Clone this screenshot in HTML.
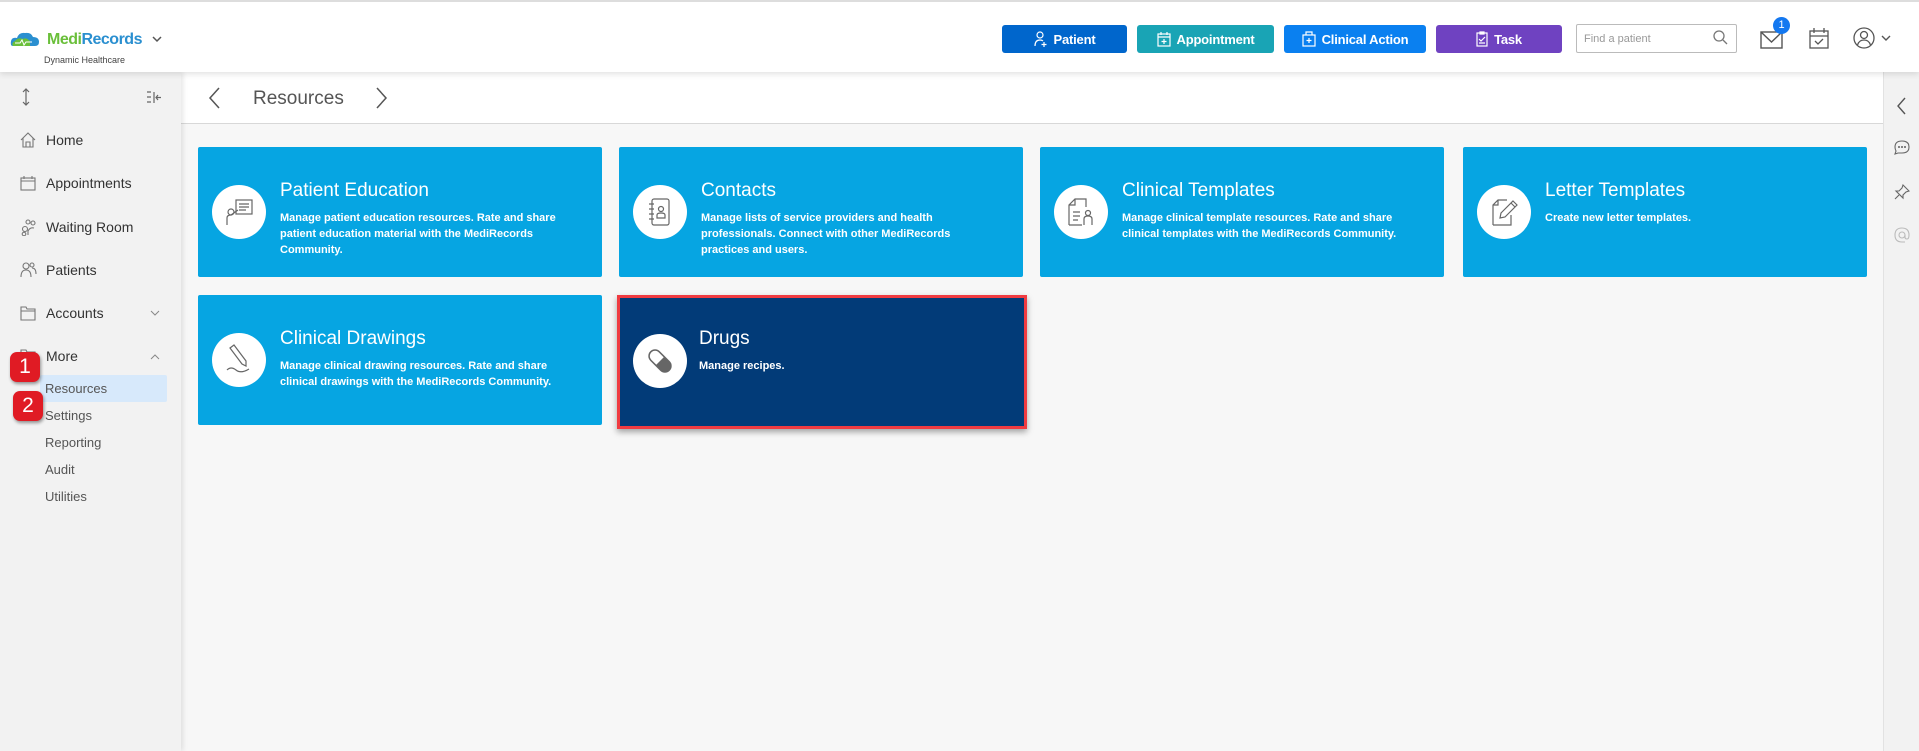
<!DOCTYPE html>
<html><head><meta charset="utf-8"><style>
*{box-sizing:border-box;margin:0;padding:0}
body{width:1919px;height:751px;overflow:hidden;background:#f7f7f7;font-family:"Liberation Sans",sans-serif;position:relative}
.hdr{position:absolute;left:0;top:0;width:1919px;height:72px;background:#fff;border-top:2px solid #ddd;box-shadow:0 2px 6px rgba(0,0,0,.12);z-index:5}
.side{position:absolute;left:0;top:72px;width:181px;height:679px;background:#f2f2f2;box-shadow:2px 0 5px rgba(0,0,0,.1);z-index:3}
.rail{position:absolute;right:0;top:72px;width:36px;height:679px;background:#f2f2f2;border-left:1px solid #e2e2e2}
.bc{position:absolute;left:181px;top:72px;width:1702px;height:52px;background:#fff;border-bottom:1px solid #d8d8d8}
.btn{position:absolute;top:23px;height:28px;border-radius:3px;color:#fff;font-size:13px;font-weight:bold;display:flex;align-items:center;justify-content:center;gap:6px;letter-spacing:-0.2px}
.card{position:absolute;width:404px;height:130px;background:#06a5e2;border-radius:2px;color:#fff}
.card .ic{position:absolute;left:14px;top:38px;width:54px;height:54px;border-radius:50%;background:#fff;display:flex;align-items:center;justify-content:center}
.card h3{position:absolute;left:82px;top:33px;font-size:19px;font-weight:normal}
.card p{position:absolute;left:82px;top:63px;width:300px;font-size:11px;font-weight:bold;line-height:16px}
.nav{position:absolute;left:0;font-size:14px;color:#333;display:flex;align-items:center}
.nav svg{position:absolute;left:20px}
.nav span{position:absolute;left:46px;white-space:nowrap}
.sub{position:absolute;left:45px;font-size:13px;color:#555}
.badge{position:absolute;width:30px;height:30px;background:#e01b24;border-radius:7px;color:#fff;font-size:21px;text-align:center;line-height:30px;box-shadow:1px 2px 3px rgba(0,0,0,.4);z-index:4}
</style></head><body>
<div class="hdr">
 <svg style="position:absolute;left:10px;top:28px" width="30" height="18" viewBox="0 0 30 18"><path d="M3 16 Q0 16 1 11 Q2 7 7 8 Q9 2 15 3 Q21 2 23 7 Q29 7 29 12 Q29 16 25 16Z" fill="#2a8fd0"/><path d="M3 16 Q1 13 5 11 Q8 7 13 9 Q16 7 20 11 L20 16Z" fill="#6abf3a"/><path d="M5 13 H10 L12 10 L14 15 L16 12 H22" stroke="#fff" stroke-width="1" fill="none"/></svg>
 <div style="position:absolute;left:47px;top:29px;font-size:16px;font-weight:bold;letter-spacing:-0.5px"><span style="color:#6abf3a">Medi</span><span style="color:#2a8fd0">Records</span></div>
 <svg style="position:absolute;left:152px;top:34px" width="10" height="7"><path d="M1 1 L5 5 L9 1" stroke="#555" stroke-width="1.5" fill="none"/></svg>
 <div style="position:absolute;left:44px;top:53px;font-size:9px;color:#444">Dynamic Healthcare</div>
 <div class="btn" style="left:1002px;width:125px;background:#0066cc"><svg width="14" height="16" viewBox="0 0 14 16" fill="none" stroke="#fff" stroke-width="1.2"><circle cx="6" cy="4" r="3"/><path d="M1 15 Q1 9 6 9 Q8 9 9 10"/><path d="M10 11 V16 M7.5 13.5 H12.5"/></svg>Patient</div>
 <div class="btn" style="left:1137px;width:137px;background:#19a4b5"><svg width="14" height="16" viewBox="0 0 14 16" fill="none" stroke="#fff" stroke-width="1.2"><rect x="1" y="3" width="12" height="12"/><path d="M4 1V4M10 1V4M1 6H13M7 8V13M4.5 10.5H9.5"/></svg>Appointment</div>
 <div class="btn" style="left:1284px;width:142px;background:#0a80f0"><svg width="14" height="16" viewBox="0 0 14 16" fill="none" stroke="#fff" stroke-width="1.2"><rect x="1" y="4" width="12" height="11"/><path d="M4 4V1H10V4M7 7V12M4.5 9.5H9.5"/></svg>Clinical Action</div>
 <div class="btn" style="left:1436px;width:126px;background:#6f42c1"><svg width="12" height="16" viewBox="0 0 12 16" fill="none" stroke="#fff" stroke-width="1.2"><rect x="1" y="2" width="10" height="13"/><path d="M4 1H8V3H4Z M3 8L5 10L9 6 M3 12H9"/></svg>Task</div>
 <div style="position:absolute;left:1576px;top:22px;width:161px;height:29px;border:1px solid #bbb;border-radius:2px;font-size:11px;color:#999;padding:8px 7px">Find a patient</div>
 <svg style="position:absolute;left:1713px;top:28px" width="15" height="15" fill="none" stroke="#777" stroke-width="1.3"><circle cx="6" cy="6" r="5"/><path d="M10 10L14 14"/></svg>
 <svg style="position:absolute;left:1760px;top:28px" width="24" height="20" fill="none" stroke="#555" stroke-width="1.4"><rect x="1" y="2" width="21" height="16"/><path d="M1 2L11.5 12L22 2"/></svg>
 <div style="position:absolute;left:1773px;top:15px;width:17px;height:17px;border-radius:50%;background:#1478f0;color:#fff;font-size:11px;text-align:center;line-height:17px">1</div>
 <svg style="position:absolute;left:1809px;top:25px" width="20" height="22" fill="none" stroke="#555" stroke-width="1.3"><rect x="1" y="4" width="18" height="17"/><path d="M5 1V6M15 1V6M1 9H19M6 14L9 17L14 12"/></svg>
 <svg style="position:absolute;left:1853px;top:25px" width="22" height="22" fill="none" stroke="#555" stroke-width="1.3"><circle cx="11" cy="11" r="10"/><circle cx="11" cy="8" r="3.5"/><path d="M4.5 18Q6 13 11 13Q16 13 17.5 18"/></svg>
 <svg style="position:absolute;left:1881px;top:33px" width="10" height="7"><path d="M1 1L5 5L9 1" stroke="#555" stroke-width="1.4" fill="none"/></svg>
</div>

<div class="side">
 <svg style="position:absolute;left:21px;top:16px" width="10" height="18" fill="none" stroke="#666" stroke-width="1.2"><path d="M5 1V17M2 4L5 1L8 4M2 14L5 17L8 14"/></svg>
 <svg style="position:absolute;left:146px;top:19px" width="16" height="13" fill="none" stroke="#666" stroke-width="1.2"><path d="M1 1H5M1 6H5M1 11H5M8 1V12M15 6.5H10M12 4L10 6.5L12 9"/></svg>
</div>
<div class="nav" style="top:140px;z-index:4"><svg width="16" height="16" fill="none" stroke="#777" stroke-width="1.1"><path d="M1 8L8 1L15 8M3 6V15H13V6M6 15V10H10V15"/></svg><span>Home</span></div>
<div class="nav" style="top:183px;z-index:4"><svg width="16" height="16" fill="none" stroke="#777" stroke-width="1.1"><rect x="1" y="3" width="14" height="12"/><path d="M4 1V4M12 1V4M1 6H15"/></svg><span>Appointments</span></div>
<div class="nav" style="top:227px;z-index:4"><svg width="17" height="17" fill="none" stroke="#777" stroke-width="1.1"><circle cx="8" cy="3" r="2"/><circle cx="13" cy="4" r="2"/><circle cx="5" cy="10" r="2.5"/><circle cx="4" cy="15" r="1.8"/><path d="M8 16V12Q10 8 14 9"/></svg><span>Waiting Room</span></div>
<div class="nav" style="top:270px;z-index:4"><svg width="17" height="16" fill="none" stroke="#777" stroke-width="1.1"><circle cx="6" cy="4" r="3"/><circle cx="12" cy="3" r="2"/><path d="M1 15Q1 8 6 8Q11 8 11 15M12 6Q16 6 16 12"/></svg><span>Patients</span></div>
<div class="nav" style="top:313px;z-index:4"><svg width="16" height="15" fill="none" stroke="#777" stroke-width="1.1"><path d="M1 1H6L7 3H15V14H1Z M1 5H15"/></svg><span>Accounts</span></div>
<svg style="position:absolute;left:150px;top:310px;z-index:4" width="10" height="6" fill="none" stroke="#888"><path d="M1 1L5 5L9 1"/></svg>
<div class="nav" style="top:356px;z-index:4"><svg width="16" height="15" fill="none" stroke="#777" stroke-width="1.1"><path d="M1 1H6L7 3H15V14H1Z"/></svg><span>More</span></div>
<svg style="position:absolute;left:150px;top:354px;z-index:4" width="10" height="6" fill="none" stroke="#888"><path d="M1 5L5 1L9 5"/></svg>
<div style="position:absolute;left:40px;top:375px;width:127px;height:27px;background:#d7e9fb;border-radius:2px;z-index:4"></div>
<div class="sub" style="top:381px;z-index:4">Resources</div>
<div class="sub" style="top:408px;z-index:4">Settings</div>
<div class="sub" style="top:435px;z-index:4">Reporting</div>
<div class="sub" style="top:462px;z-index:4">Audit</div>
<div class="sub" style="top:489px;z-index:4">Utilities</div>
<div class="badge" style="left:10px;top:352px">1</div>
<div class="badge" style="left:13px;top:391px">2</div>

<div class="bc">
 <svg style="position:absolute;left:27px;top:15px" width="12" height="22" fill="none" stroke="#555" stroke-width="1.5"><path d="M11 1L2 11L11 21"/></svg>
 <div style="position:absolute;left:72px;top:16px;font-size:19px;color:#555">Resources</div>
 <svg style="position:absolute;left:195px;top:15px" width="12" height="22" fill="none" stroke="#555" stroke-width="1.5"><path d="M1 1L10 11L1 21"/></svg>
</div>

<div class="rail">
 <svg style="position:absolute;left:12px;top:25px" width="10" height="18" fill="none" stroke="#555" stroke-width="1.4"><path d="M9 1L2 9L9 17"/></svg>
 <svg style="position:absolute;left:10px;top:68px" width="16" height="15" fill="none" stroke="#666" stroke-width="1.1"><path d="M8 1Q15 1 15 7Q15 13 8 13H4L1 14L2 11Q1 9 1 7Q1 1 8 1Z"/><circle cx="5" cy="7" r=".5"/><circle cx="8" cy="7" r=".5"/><circle cx="11" cy="7" r=".5"/></svg>
 <svg style="position:absolute;left:10px;top:112px" width="16" height="16" fill="none" stroke="#666" stroke-width="1.1"><path d="M9 1L15 7L12 8L9 11L9 14L2 7L5 7L8 4Z M5 11L1 15"/></svg>
 <svg style="position:absolute;left:10px;top:155px" width="16" height="16" fill="none" stroke="#bbb" stroke-width="1.1"><circle cx="8" cy="8" r="3"/><path d="M11 8V10Q11 12 13 12Q15 12 15 8Q15 1 8 1Q1 1 1 8Q1 15 8 15H11"/></svg>
</div>

<div class="card" style="left:198px;top:147px"><div class="ic"><svg width="30" height="30" fill="none" stroke="#666" stroke-width="1.2"><rect x="12" y="3" width="16" height="14"/><path d="M15 7H25M15 10H25M15 13H22"/><circle cx="7" cy="15" r="3"/><path d="M3 28V21Q3 18 7 18L14 13"/></svg></div><h3>Patient Education</h3><p>Manage patient education resources. Rate and share patient education material with the MediRecords Community.</p></div>
<div class="card" style="left:619px;top:147px"><div class="ic"><svg width="28" height="30" fill="none" stroke="#666" stroke-width="1.2"><rect x="6" y="2" width="17" height="26" rx="2"/><path d="M3 7H8M3 12H8M3 17H8M3 22H8"/><circle cx="15" cy="12" r="2.5"/><path d="M11 21V18Q11 16 15 16Q19 16 19 18V21Z"/></svg></div><h3>Contacts</h3><p>Manage lists of service providers and health professionals. Connect with other MediRecords practices and users.</p></div>
<div class="card" style="left:1040px;top:147px"><div class="ic"><svg width="30" height="30" fill="none" stroke="#666" stroke-width="1.2"><path d="M3 28V8L9 2H20V10 M3 8H9V2 M16 28H3"/><path d="M7 15H14M7 19H14M7 23H12"/><circle cx="22" cy="16" r="2.5"/><path d="M18 28V22Q18 19 22 19Q26 19 26 22V28"/></svg></div><h3>Clinical Templates</h3><p>Manage clinical template resources. Rate and share clinical templates with the MediRecords Community.</p></div>
<div class="card" style="left:1463px;top:147px"><div class="ic"><svg width="30" height="30" fill="none" stroke="#666" stroke-width="1.2"><path d="M4 28V8L9 3H18M4 8H9V3M22 18V28H4"/><path d="M24 4L28 8L16 20L11 21L12 16Z M22 6L26 10"/></svg></div><h3>Letter Templates</h3><p>Create new letter templates.</p></div>
<div class="card" style="left:198px;top:295px"><div class="ic"><svg width="30" height="32" fill="none" stroke="#666" stroke-width="1.2"><path d="M6 4L10 1L22 17L22 22L18 20Z M6 4L18 20"/><path d="M3 26Q7 22 12 26Q17 30 25 25"/></svg></div><h3>Clinical Drawings</h3><p>Manage clinical drawing resources. Rate and share clinical drawings with the MediRecords Community.</p></div>
<div class="card" style="left:617px;top:295px;width:410px;height:134px;background:#023b78;border:3px solid #f03b41;border-radius:0;box-shadow:0 3px 6px rgba(0,0,0,.35)"><div class="ic" style="left:13px;top:36px"><svg width="30" height="30"><g transform="rotate(-45 15 15)"><rect x="9" y="2" width="12" height="26" rx="6" fill="none" stroke="#666" stroke-width="1.5"/><path d="M9 15H21V22A6 6 0 0 1 9 22Z" fill="#666"/></g></svg></div><h3 style="left:79px;top:30px">Drugs</h3><p style="left:79px;top:60px">Manage recipes.</p></div>
</body></html>
